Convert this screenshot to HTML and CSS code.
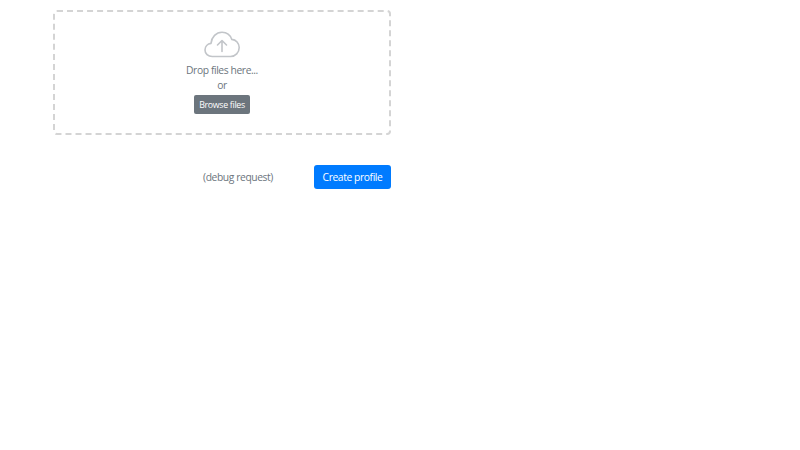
FILE: index.html
```html
<!DOCTYPE html>
<html lang="en">
<head>
<meta charset="utf-8">
<title>Create profile</title>
<link rel="stylesheet" href="styles.css">
</head>
<body>
<main class="form">
  <section class="dropzone">
    <svg class="cloud" width="36" height="27" viewBox="0 0 36 27" fill="none" stroke="#c2c5c9" stroke-width="1.6" stroke-linecap="round" stroke-linejoin="round">
      <path d="M9 25.500H8.200C4 25.500 1 22.600 1 18.900c0-3.400 2.600-6.100 6-6.500C7.600 6 12.200 1.200 18 1.200c4.600 0 8.400 3 9.800 7.200 4.200.3 7.400 3.900 7.400 8.200 0 4.900-3.800 8.900-8.700 8.900H9z"/>
      <path d="M18 20.500V9.500M13.500 14l4.500-4.500 4.500 4.500"/>
    </svg>
    <p class="hint">Drop files here...</p>
    <p class="or">or</p>
    <button class="browse" type="button">Browse files</button>
  </section>
  <div class="actions">
    <a class="debug">(debug request)</a>
    <button class="create" type="button">Create profile</button>
  </div>
</main>
</body>
</html>
```
FILE: styles.css
```css
* { box-sizing: border-box; }
html, body { margin: 0; padding: 0; background: #fff; }
body {
  font-family: "Open Sans", Lato, "Liberation Sans", sans-serif;
  font-size: 10.300px;
  letter-spacing: -0.400px;
  color: #6c757d;
}
.form {
  width: 338px;
  margin: 10px 0 0 53px;
}
.dropzone {
  height: 125px;
  border: 2px dashed #d4d4d4;
  border-radius: 4px;
  display: flex;
  flex-direction: column;
  align-items: center;
  padding-top: 19px;
}
.cloud { display: block; }
.hint, .or {
  margin: 0;
  line-height: 15px;
}
.hint { margin-top: 5px; }
.browse {
  margin-top: 2px;
  width: 56px;
  height: 19px;
  padding: 0;
  border: 0;
  border-radius: 2px;
  background: #6c757d;
  color: #fff;
  font: inherit;
  font-size: 8.800px;
  letter-spacing: -0.300px;
}
.actions {
  margin-top: 30px;
  display: flex;
  justify-content: flex-end;
  align-items: center;
  gap: 41px;
}
.debug { padding-bottom: 1px; }
.create {
  width: 77px;
  height: 24px;
  padding: 0 0 1px;
  border: 0;
  border-radius: 3px;
  background: #007bff;
  color: #fff;
  font: inherit;
  letter-spacing: -0.400px;
}
```
